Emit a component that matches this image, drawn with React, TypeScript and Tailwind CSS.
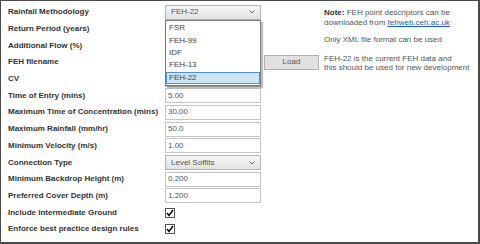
import React from 'react';

const rows: { label: string; kind: 'select' | 'input' | 'file' | 'check'; value?: string }[] = [
  { label: 'Rainfall Methodology', kind: 'select', value: 'FEH-22' },
  { label: 'Return Period (years)', kind: 'input', value: '' },
  { label: 'Additional Flow (%)', kind: 'input', value: '' },
  { label: 'FEH filename', kind: 'file' },
  { label: 'CV', kind: 'input', value: '' },
  { label: 'Time of Entry (mins)', kind: 'input', value: '5.00' },
  { label: 'Maximum Time of Concentration (mins)', kind: 'input', value: '30.00' },
  { label: 'Maximum Rainfall (mm/hr)', kind: 'input', value: '50.0' },
  { label: 'Minimum Velocity (m/s)', kind: 'input', value: '1.00' },
  { label: 'Connection Type', kind: 'select', value: 'Level Soffits' },
  { label: 'Minimum Backdrop Height (m)', kind: 'input', value: '0.200' },
  { label: 'Preferred Cover Depth (m)', kind: 'input', value: '1.200' },
  { label: 'Include Intermediate Ground', kind: 'check' },
  { label: 'Enforce best practice design rules', kind: 'check' },
];

const options = ['FSR', 'FEH-99', 'IDF', 'FEH-13', 'FEH-22'];

const Chevron = () => (
  <svg width="6" height="4" viewBox="0 0 6 4" className="text-[#666]">
    <path d="M0.5 0.5 L3 3 L5.5 0.5" fill="none" stroke="currentColor" strokeWidth="1" />
  </svg>
);

const Select = ({ value }: { value: string }) => (
  <div className="flex h-[15px] w-[96px] items-center justify-between border border-[#b5b5b5] bg-gradient-to-b from-[#f6f6f6] to-[#e2e2e2] pl-[5px] pr-[5px] text-[8px] text-[#555]">
    <span>{value}</span>
    <Chevron />
  </div>
);

const Input = ({ value }: { value?: string }) => (
  <div className="flex h-[15px] w-[96px] items-center border border-[#c4c4c4] bg-white px-[2px] text-[8px] text-[#555]">
    {value}
  </div>
);

const Check = () => (
  <div className="flex h-[10px] w-[10px] items-center justify-center border border-[#555] bg-white">
    <svg width="8" height="8" viewBox="0 0 8 8">
      <path d="M1 4 L3 6.5 L7 1" fill="none" stroke="#111" strokeWidth="1.6" />
    </svg>
  </div>
);

export default function App() {
  return (
    <div
      className="flex h-[244px] w-[480px] border-t border-l border-r-2 border-b-2 border-[#4a4a4a] bg-white"
      style={{ fontFamily: '"Liberation Sans", Arial, sans-serif' }}
    >
      <div className="relative w-[323px] pt-[3px]">
        {rows.map((r) => (
          <div key={r.label} className="flex h-[16.7px] items-center">
            <div className="w-[164px] pl-[7px] text-[8px] font-bold leading-none text-[#333]">{r.label}</div>
            {r.kind === 'select' && <Select value={r.value!} />}
            {r.kind === 'input' && <Input value={r.value} />}
            {r.kind === 'check' && <Check />}
            {r.kind === 'file' && (
              <>
                <Input />
                <button
                  type="button"
                  className="ml-[3px] flex h-[15px] w-[55px] items-center justify-center border border-[#b0b0b0] bg-[#e1e1e1] text-[8px] text-[#555]"
                >
                  Load
                </button>
              </>
            )}
          </div>
        ))}
        <div className="absolute top-[19px] left-[164px] w-[96px] border border-[#7a7a7a] bg-white py-[1px] text-[8px] text-[#444] shadow-[2px_2px_1px_rgba(0,0,0,0.25)]">
          {options.map((o) => (
            <div
              key={o}
              className={
                o === 'FEH-22'
                  ? 'flex h-[12.4px] items-center border border-[#4f95d6] bg-[#cfe5f7] pl-[2px]'
                  : 'flex h-[12.4px] items-center border border-transparent pl-[2px]'
              }
            >
              {o}
            </div>
          ))}
        </div>
      </div>
      <div className="w-[154px] pt-[7px] text-[8px] leading-[9.5px] whitespace-nowrap text-[#555]">
        <p>
          <span className="font-bold text-[#333]">Note:</span> FEH point descriptors can be
          <br />
          downloaded from <span className="text-[#1a5fb4] underline">fehweb.ceh.ac.uk</span>
        </p>
        <p className="mt-[8px]">Only XML file format can be used</p>
        <p className="mt-[9px]">
          FEH-22 is the current FEH data and
          <br />
          this should be used for new development
        </p>
      </div>
    </div>
  );
}
